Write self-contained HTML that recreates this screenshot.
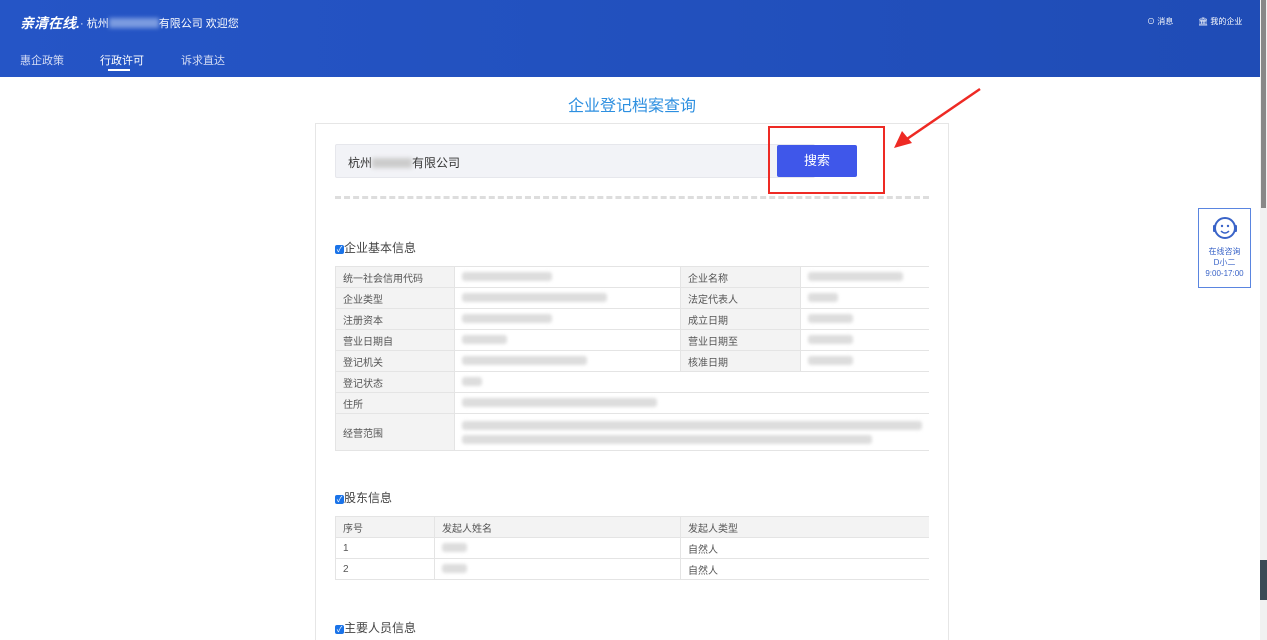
<!DOCTYPE html><html style="height:640px;overflow:hidden"><head><meta charset="utf-8"><style>
*{margin:0;padding:0;box-sizing:border-box}
body{width:1267px;height:640px;overflow:hidden;background:#fff;font-family:"Liberation Sans","Noto Sans CJK SC",sans-serif;position:relative;color:#333}
.a{position:absolute}
.hdr{left:0;top:0;width:1260px;height:77px;background:linear-gradient(90deg,#2555c6,#1f4cb6)}
.w{color:#fff;font-size:12px}
.t{border-collapse:collapse;font-size:10px;color:#555}
.t td{border:1px solid #e4e4e4;padding:0 7px;height:21px;vertical-align:middle}
.t td:last-child{border-right:none}
.g{background:#f3f3f3}
.bl{display:inline-block;height:9px;background:#ddd;border-radius:3px;filter:blur(1.5px);vertical-align:middle}
.cb{display:inline-block;width:9px;height:9px;background:#1a73e8;border-radius:2px;color:#fff;font-size:8px;line-height:9px;text-align:center;vertical-align:0}
.sec{font-size:12px;color:#444}
</style></head><body>
<div class="a hdr"></div>
<div class="a w" style="left:20px;top:13px;font-size:14px;font-weight:bold;font-style:italic">亲清在线.</div>
<div class="a w" style="left:80px;top:15px;font-size:11px">· 杭州<span style="display:inline-block;width:50px;height:10px;background:#7b9be0;filter:blur(2px);vertical-align:-1px"></span>有限公司 欢迎您</div>
<div class="a w" style="left:20px;top:52px;font-size:11px;color:#d4dcf4">惠企政策</div>
<div class="a w" style="left:100px;top:52px;font-size:11px">行政许可</div>
<div class="a" style="left:108px;top:69px;width:22px;height:2px;background:#fff"></div>
<div class="a w" style="left:181px;top:52px;font-size:11px;color:#d4dcf4">诉求直达</div>
<div class="a w" style="left:1147px;top:16px;font-size:8px">⊙ 消息</div>
<div class="a w" style="left:1198px;top:16px;font-size:8px">🏛 我的企业</div>
<div class="a" style="left:1260px;top:0;width:7px;height:640px;background:#f1f1f1"></div>
<div class="a" style="left:1261px;top:0;width:5px;height:208px;background:#888"></div>
<div class="a" style="left:1260px;top:560px;width:7px;height:40px;background:#3a4a55"></div>
<div class="a" style="left:568px;top:92px;font-size:16px;color:#2d8fe0">企业登记档案查询</div>
<div class="a" style="left:315px;top:123px;width:634px;height:517px;border:1px solid #e6e6e6;border-bottom:none"></div>
<div class="a" style="left:335px;top:144px;width:480px;height:34px;background:#f2f3f7;border:1px solid #e6e7ec;border-radius:2px"></div>
<div class="a" style="left:348px;top:154px;font-size:12px;color:#333">杭州<span style="display:inline-block;width:40px;height:10px;background:#ccc;filter:blur(2px);vertical-align:-1px"></span>有限公司</div>
<div class="a" style="left:777px;top:145px;width:80px;height:32px;background:#3f57ea;border-radius:2px;color:#fff;font-size:13px;text-align:center;line-height:32px">搜索</div>
<div class="a" style="left:768px;top:126px;width:117px;height:68px;border:2px solid #ee2a24"></div>
<svg class="a" style="left:890px;top:85px" width="95" height="70"><line x1="90" y1="4" x2="14" y2="56" stroke="#ee2a24" stroke-width="2.5"/><polygon points="4,63 12,46 22,58" fill="#ee2a24"/></svg>
<div class="a" style="left:335px;top:196px;width:594px;border-top:3px dashed #ddd"></div>
<div class="a sec" style="left:335px;top:239px"><span class="cb">✓</span>企业基本信息</div>
<table class="a t" style="left:335px;top:266px;width:594px">
<tr><td class="g" style="width:119px">统一社会信用代码</td><td style="width:226px"><span class="bl" style="width:90px"></span></td><td class="g" style="width:120px">企业名称</td><td><span class="bl" style="width:95px"></span></td></tr>
<tr><td class="g">企业类型</td><td><span class="bl" style="width:145px"></span></td><td class="g">法定代表人</td><td><span class="bl" style="width:30px"></span></td></tr>
<tr><td class="g">注册资本</td><td><span class="bl" style="width:90px"></span></td><td class="g">成立日期</td><td><span class="bl" style="width:45px"></span></td></tr>
<tr><td class="g">营业日期自</td><td><span class="bl" style="width:45px"></span></td><td class="g">营业日期至</td><td><span class="bl" style="width:45px"></span></td></tr>
<tr><td class="g">登记机关</td><td><span class="bl" style="width:125px"></span></td><td class="g">核准日期</td><td><span class="bl" style="width:45px"></span></td></tr>
<tr><td class="g">登记状态</td><td colspan="3"><span class="bl" style="width:20px"></span></td></tr>
<tr><td class="g">住所</td><td colspan="3"><span class="bl" style="width:195px"></span></td></tr>
<tr><td class="g" style="height:37px">经营范围</td><td colspan="3"><span class="bl" style="width:460px"></span><br><span class="bl" style="width:410px;margin-top:4px"></span></td></tr>
</table>
<div class="a sec" style="left:335px;top:489px"><span class="cb">✓</span>股东信息</div>
<table class="a t" style="left:335px;top:516px;width:594px">
<tr><td class="g" style="width:99px">序号</td><td class="g" style="width:246px">发起人姓名</td><td class="g">发起人类型</td></tr>
<tr><td>1</td><td><span class="bl" style="width:25px"></span></td><td>自然人</td></tr>
<tr><td>2</td><td><span class="bl" style="width:25px"></span></td><td>自然人</td></tr>
</table>
<div class="a sec" style="left:335px;top:619px"><span class="cb">✓</span>主要人员信息</div>
<div class="a" style="left:1198px;top:208px;width:53px;height:80px;border:1px solid #5a85e0;background:#fff;text-align:center;font-size:8px;color:#3a64c8;line-height:11px">
<svg width="32" height="30" style="margin-top:4px"><circle cx="16" cy="15" r="10" fill="none" stroke="#3a64c8" stroke-width="2"/><circle cx="13" cy="13" r="1.2" fill="#3a64c8"/><circle cx="19" cy="13" r="1.2" fill="#3a64c8"/><path d="M12 18 Q16 22 20 18" fill="none" stroke="#3a64c8" stroke-width="1.5"/><rect x="4" y="12" width="3" height="7" rx="1" fill="#3a64c8"/><rect x="25" y="12" width="3" height="7" rx="1" fill="#3a64c8"/></svg>
<div>在线咨询</div><div>D小二</div><div>9:00-17:00</div></div>
</body></html>
